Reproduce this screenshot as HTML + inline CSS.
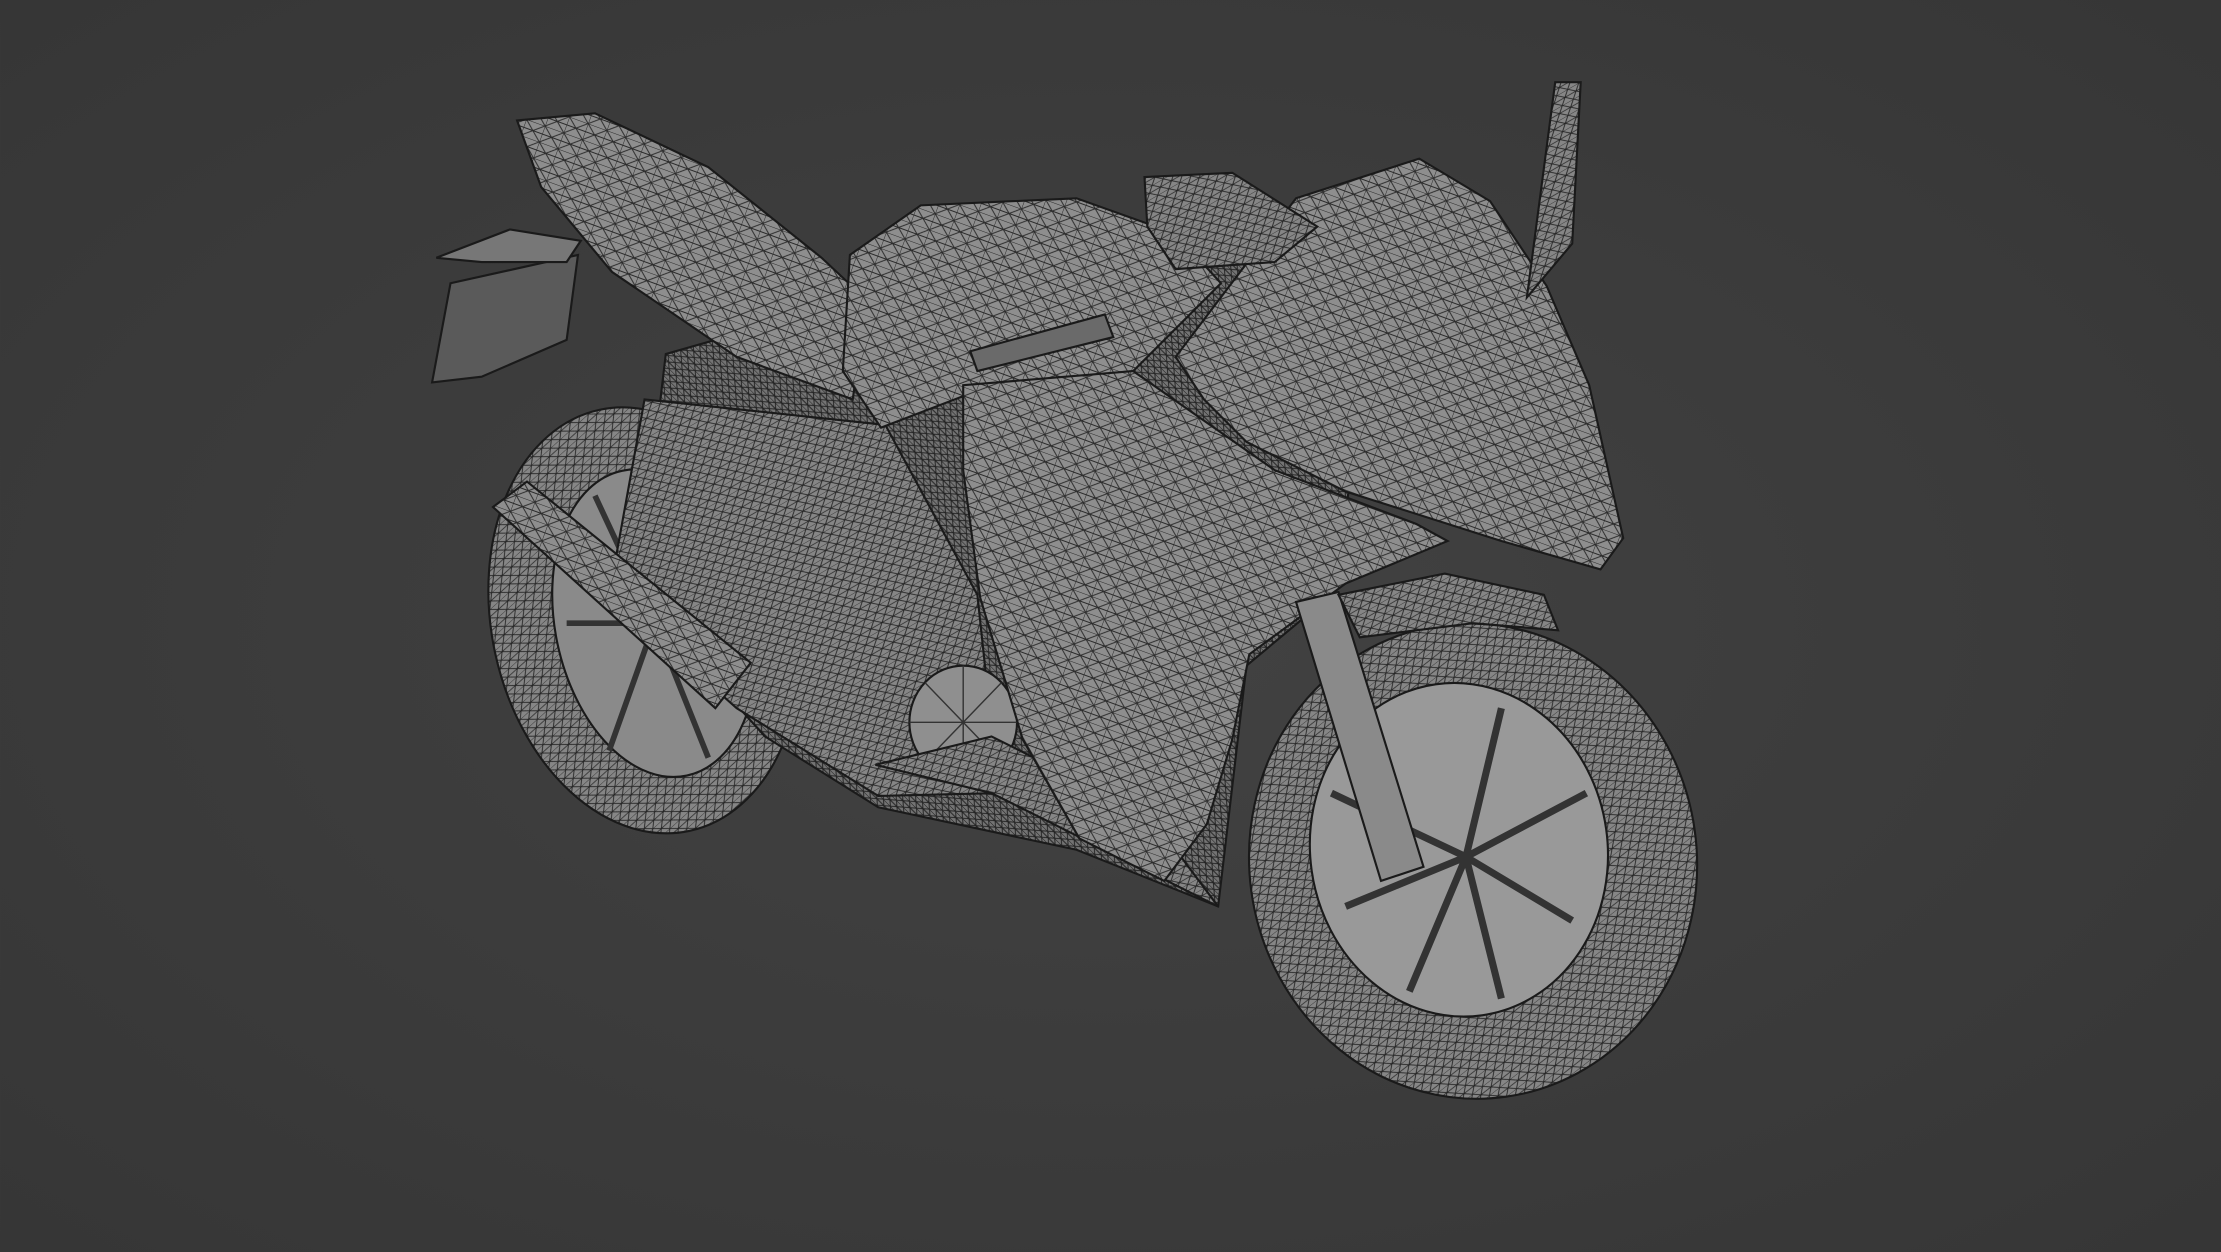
<!DOCTYPE html>
<html><head><meta charset="utf-8"><style>
html,body{margin:0;padding:0;width:2221px;height:1252px;overflow:hidden;background:#3b3b3b}
svg{display:block}
</style></head><body>
<svg width="2221" height="1252" viewBox="0 0 1568 884" xmlns="http://www.w3.org/2000/svg">
<defs>
<radialGradient id="bg" cx="50%" cy="50%" r="70%">
<stop offset="0" stop-color="#424242"/><stop offset="1" stop-color="#363636"/>
</radialGradient>
<pattern id="mesh" width="14" height="12" patternUnits="userSpaceOnUse" patternTransform="rotate(20)">
<rect width="14" height="12" fill="#8e8e8e"/>
<path d="M0 0H14M0 6H14M0 0L7 6L14 0M0 12L7 6L14 12M0 0V12" stroke="#2a2a2a" stroke-width="0.7" fill="none"/>
</pattern>
<pattern id="mesh2" width="9" height="8" patternUnits="userSpaceOnUse" patternTransform="rotate(-30)">
<rect width="9" height="8" fill="#868686"/>
<path d="M0 0H9M0 4H9M0 0L4.5 4L9 0M0 8L4.5 4L9 8" stroke="#252525" stroke-width="0.6" fill="none"/>
</pattern>
<pattern id="mesh3" width="7" height="6" patternUnits="userSpaceOnUse" patternTransform="rotate(45)">
<rect width="7" height="6" fill="#747474"/>
<path d="M0 0H7M0 3H7M0 0L3.5 3L7 0M0 6L3.5 3L7 6" stroke="#222" stroke-width="0.7" fill="none"/>
</pattern>
</defs>
<rect width="1568" height="884" fill="url(#bg)"/>
<g stroke="#1a1a1a" stroke-width="1.5">
<!-- rear wheel -->
<ellipse cx="455" cy="438" rx="108" ry="152" transform="rotate(-12 455 438)" fill="url(#mesh2)"/>
<ellipse cx="462" cy="440" rx="70" ry="110" transform="rotate(-12 462 440)" fill="#8a8a8a"/>
<g stroke="#333" stroke-width="4"><path d="M462 440L420 350M462 440L505 350M462 440L430 530M462 440L500 535M462 440L400 440"/></g>
<!-- underlying body filler -->
<path d="M470 250L610 210L700 150L880 170L930 160L960 300L940 420L880 470L860 640L760 600L620 570L540 520L450 420Z" fill="url(#mesh3)"/>
<!-- plate -->
<path d="M305 270L318 200L408 180L400 240L340 266Z" fill="#5a5a5a"/>
<path d="M308 182L360 162L410 170L400 185L340 185Z" fill="#777"/>
<!-- tail seat -->
<path d="M365 85L420 80L500 118L580 182L612 212L602 282L520 252L432 192L382 132Z" fill="url(#mesh)"/>
<!-- engine / frame -->
<path d="M455 282L625 300L690 420L705 560L620 562L520 500L430 420Z" fill="url(#mesh2)"/>
<ellipse cx="680" cy="510" rx="38" ry="40" fill="#8f8f8f"/>
<g stroke="#333" stroke-width="1"><path d="M680 470V550M642 510H718M653 482L707 538M707 482L653 538"/></g>
<!-- exhaust -->
<path d="M348 358L372 340L530 468L505 500Z" fill="url(#mesh)"/>
<!-- front wheel -->
<ellipse cx="1040" cy="608" rx="158" ry="168" transform="rotate(-8 1040 608)" fill="url(#mesh2)"/>
<ellipse cx="1030" cy="600" rx="105" ry="118" transform="rotate(-8 1030 600)" fill="#999"/>
<g stroke="#333" stroke-width="5"><path d="M1035 605L1060 500M1035 605L1120 560M1035 605L1110 650M1035 605L1060 705M1035 605L995 700M1035 605L950 640M1035 605L940 560"/></g>
<!-- belly -->
<path d="M618 540L700 560L760 590L860 640L830 600L780 560L700 520Z" fill="url(#mesh2)"/>
<!-- tank -->
<path d="M600 180L650 145L760 140L830 165L862 200L800 262L700 272L622 302L595 262Z" fill="url(#mesh)"/>
<!-- side fairing -->
<path d="M680 272L800 262L900 332L1000 370L1022 382L950 412L882 462L870 522L852 582L822 622L762 592L722 522L692 422L680 332Z" fill="url(#mesh)"/>
<!-- front fairing -->
<path d="M915 140L1002 112L1052 142L1092 202L1122 272L1146 380L1130 402L1060 382L950 347L880 312L850 282L830 252Z" fill="url(#mesh)"/>
<!-- headlight box -->
<path d="M808 125L870 122L930 160L900 185L830 190L810 160Z" fill="url(#mesh2)"/>
<!-- mirror -->
<path d="M1078 210L1098 58L1116 58L1110 172Z" fill="url(#mesh2)"/>
<!-- fork -->
<path d="M915 425L945 418L1005 612L975 622Z" fill="#8a8a8a"/>
<!-- fender -->
<path d="M945 420L1020 405L1090 420L1100 445L1040 440L960 450Z" fill="url(#mesh2)"/>
<!-- handlebar -->
<path d="M685 248L780 222L786 238L690 262Z" fill="#6a6a6a"/>
</g>
</svg>
</body></html>
